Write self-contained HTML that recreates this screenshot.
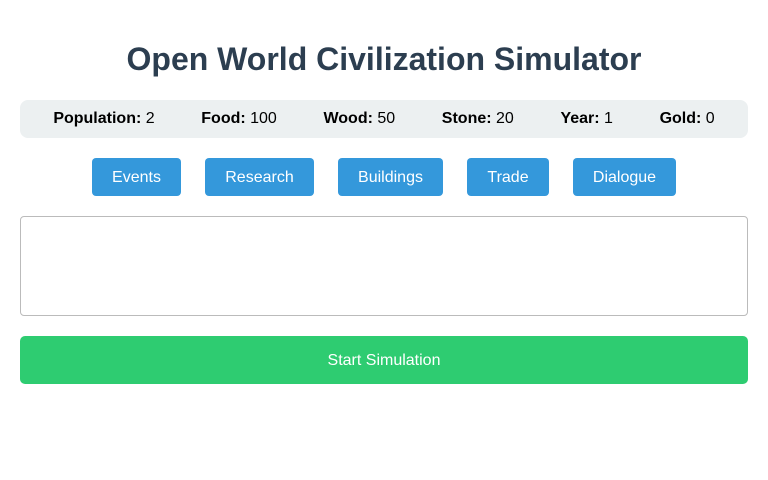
<!DOCTYPE html>
<html><head><style>
body{margin:0;width:768px;height:480px;background:#fff;font-family:"Liberation Sans",sans-serif;}
h1{margin:0;position:absolute;top:40px;left:0;width:768px;text-align:center;font-size:32px;color:#2c3e50;font-weight:bold;line-height:38px;}
.stats{position:absolute;left:20px;top:100px;width:728px;height:38px;background:#ecf0f1;border-radius:8px;display:flex;justify-content:space-around;align-items:center;font-size:16px;color:#000;padding:0 10px;box-sizing:border-box;}
.b{position:absolute;top:158px;background:#3498db;color:#fff;height:38px;line-height:40px;text-align:center;border-radius:4px;font-size:16px;}
.log{position:absolute;left:20px;top:216px;width:728px;height:100px;border:1px solid #bbb;border-radius:4px;box-sizing:border-box;}
.start{position:absolute;left:20px;top:336px;width:728px;height:48px;background:#2ecc71;border-radius:5px;color:#fff;font-size:16px;text-align:center;line-height:50px;}
</style></head><body>
<h1>Open World Civilization Simulator</h1>
<div class="stats"><span><b>Population:</b> 2</span><span><b>Food:</b> 100</span><span><b>Wood:</b> 50</span><span><b>Stone:</b> 20</span><span><b>Year:</b> 1</span><span><b>Gold:</b> 0</span></div>
<div class="b" style="left:92px;width:89px">Events</div>
<div class="b" style="left:205px;width:109px">Research</div>
<div class="b" style="left:338px;width:105px">Buildings</div>
<div class="b" style="left:467px;width:82px">Trade</div>
<div class="b" style="left:573px;width:103px">Dialogue</div>
<div class="log"></div>
<div class="start">Start Simulation</div>
</body></html>
